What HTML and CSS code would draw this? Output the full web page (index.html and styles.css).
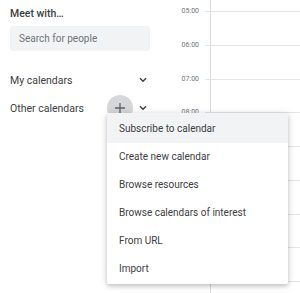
FILE: index.html
```html
<!DOCTYPE html>
<html>
<head>
<meta charset="utf-8">
<link rel="stylesheet" href="styles.css">
</head>
<body>
<div class="page">
  <aside class="sidebar">
    <div class="title">Meet with…</div>
    <div class="search">Search for people</div>
    <div class="section first">
      <span class="label">My calendars</span>
      <span class="chev"><svg width="8" height="6" viewBox="0 0 8 6"><path d="M1 1.2 L4 4.2 L7 1.2" fill="none" stroke="#3c4043" stroke-width="1.4"/></svg></span>
    </div>
    <div class="section">
      <span class="label">Other calendars</span>
      <span class="plus"><svg width="12" height="12" viewBox="0 0 12 12"><path d="M6 1 V11 M1 6 H11" fill="none" stroke="#5f6368" stroke-width="1.3"/></svg></span>
      <span class="chev near"><svg width="8" height="6" viewBox="0 0 8 6"><path d="M1 1.2 L4 4.2 L7 1.2" fill="none" stroke="#3c4043" stroke-width="1.4"/></svg></span>
    </div>
  </aside>
  <main class="calendar">
    <div class="row"><span class="time">05:00</span><span class="tick"></span></div>
    <div class="row"><span class="time">06:00</span><span class="tick"></span></div>
    <div class="row"><span class="time">07:00</span><span class="tick"></span></div>
    <div class="row"><span class="time">08:00</span><span class="tick"></span></div>
    <div class="row"><span class="time"></span><span class="tick"></span></div>
    <div class="row"><span class="time"></span><span class="tick"></span></div>
    <div class="row"><span class="time"></span><span class="tick"></span></div>
    <div class="row"><span class="time"></span><span class="tick"></span></div>
    <div class="row"><span class="time"></span><span class="tick"></span></div>
  </main>
  <ul class="menu">
    <li class="item active">Subscribe to calendar</li>
    <li class="item">Create new calendar</li>
    <li class="item">Browse resources</li>
    <li class="item">Browse calendars of interest</li>
    <li class="item">From URL</li>
    <li class="item">Import</li>
  </ul>
</div>
</body>
</html>
```
FILE: styles.css
```css
html, body {
  margin: 0;
  padding: 0;
  background: #fff;
}
body {
  font-family: Roboto, "Liberation Sans", sans-serif;
  color: #3c4043;
}
.page {
  position: relative;
  width: 300px;
  height: 293px;
  overflow: hidden;
  display: flex;
}
.sidebar {
  width: 160px;
  padding: 7px 0 0 10px;
  flex: none;
}
.title {
  font-size: 10.5px;
  font-weight: 500;
  line-height: 14px;
  color: #3c4043;
}
.search {
  margin-top: 5px;
  width: 140px;
  height: 25px;
  box-sizing: border-box;
  background: #f1f3f4;
  border-radius: 3px;
  padding-left: 9px;
  font-size: 10px;
  line-height: 25px;
  color: #70757a;
}
.section {
  width: 140px;
  height: 28px;
  display: flex;
  align-items: center;
  font-size: 10.5px;
}
.section.first {
  margin-top: 15px;
}
.label {
  flex: 1;
}
.chev {
  width: 14px;
  height: 14px;
  display: flex;
  align-items: center;
  justify-content: center;
}
.chev.near {
  margin-left: 3px;
}
.plus {
  width: 26px;
  height: 26px;
  border-radius: 50%;
  background: #d6d7d9;
  display: flex;
  align-items: center;
  justify-content: center;
}
.calendar {
  flex: 1;
  padding-top: 11px;
  background: linear-gradient(#dadce0, #dadce0) no-repeat 40px 0 / 1px 100%;
}
.row {
  height: 33.75px;
  display: flex;
  align-items: flex-start;
}
.time {
  width: 29px;
  height: 10px;
  margin-top: -5px;
  margin-right: 6px;
  text-align: right;
  font-size: 7px;
  line-height: 10px;
  color: #70757a;
}
.tick {
  flex: 1;
  border-top: 1px solid #e3e4e6;
}
.menu {
  position: absolute;
  left: 107px;
  top: 113px;
  width: 181px;
  margin: 0;
  padding: 2px 0 1px;
  list-style: none;
  background: #fff;
  border-radius: 2px;
  box-shadow: 0 2px 4px rgba(0,0,0,0.18), 0 1px 10px rgba(0,0,0,0.12);
}
.item {
  height: 28px;
  line-height: 28px;
  padding-left: 12px;
  font-size: 10px;
  color: #3c4043;
}
.item.active {
  background: #f1f3f4;
  margin-top: -2px;
  padding-top: 2px;
}
```
